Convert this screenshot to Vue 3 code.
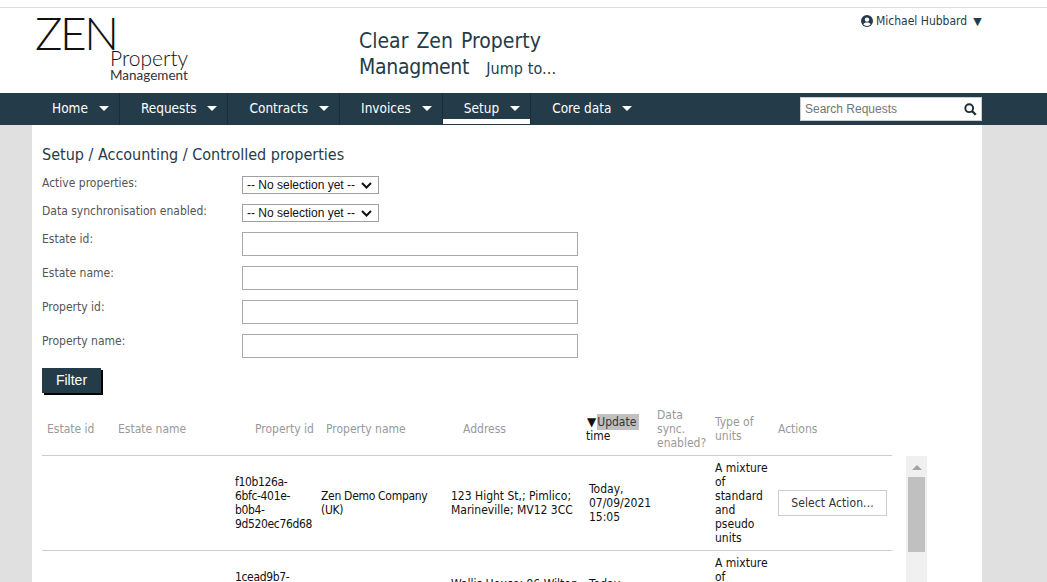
<script setup>
const navItems = [
  { label: 'Home' },
  { label: 'Requests' },
  { label: 'Contracts' },
  { label: 'Invoices' },
  { label: 'Setup', active: true },
  { label: 'Core data' }
]
const selects = ['Active properties:', 'Data synchronisation enabled:']
const inputs = ['Estate id:', 'Estate name:', 'Property id:', 'Property name:']
const rows = [
  {
    id: 'f10b126a-6bfc-401e-b0b4-9d520ec76d68',
    name: 'Zen Demo Company (UK)',
    address: '123 Hight St,; Pimlico; Marineville; MV12 3CC',
    time: 'Today, 07/09/2021 15:05'
  },
  {
    id: '1cead9b7-6bfc-401e-b0b4-9d520ec76d69',
    name: 'Zen Demo Company (UK)',
    address: 'Wallis House; 96 Wilton Road; Pimlico; Marineville; MV12 3CC',
    time: 'Today, 07/09/2021 15:05'
  }
]
</script>

<template>
  <div class="page">
    <div class="top-line"></div>
    <header class="top">
      <div class="logo">
        <div class="zen">ZEN</div>
        <div class="prop">Property</div>
        <div class="mgmt">Management</div>
      </div>
      <div class="title">
        <div class="t1">Clear Zen Property</div>
        <div><span class="t2">Managment</span><span class="jump">Jump to...</span></div>
      </div>
      <div class="user">
        <svg width="12" height="12" viewBox="0 0 12 12">
          <circle cx="6" cy="6" r="6" fill="#243c49" />
          <circle cx="6" cy="4.6" r="2.2" fill="#fff" />
          <path d="M2.3 9.3C3 7.9 4.3 7.4 6 7.4s3 .5 3.7 1.9C8.8 10.4 7.5 11 6 11s-2.8-.6-3.7-1.7z" fill="#fff" />
        </svg>
        <span>Michael Hubbard</span>
        <span class="user-caret">▼</span>
      </div>
    </header>

    <nav class="nav">
      <ul class="menu">
        <li v-for="item in navItems" :key="item.label" class="menu-item" :class="{ active: item.active }">
          <span>{{ item.label }}</span>
          <i class="caret"></i>
        </li>
      </ul>
      <div class="search">
        <span>Search Requests</span>
        <svg width="13" height="13" viewBox="0 0 13 13" fill="none" stroke="#1c2b33">
          <circle cx="5.2" cy="5.2" r="3.9" stroke-width="1.9" />
          <path d="M8.2 8.2l3.6 3.6" stroke-width="2.3" />
        </svg>
      </div>
    </nav>

    <main class="content">
      <h1 class="crumb">Setup / Accounting / Controlled properties</h1>

      <div class="selects">
        <div v-for="s in selects" :key="s" class="field sel-field">
          <label>{{ s }}</label>
          <div class="select">
            <span>-- No selection yet --</span>
            <svg width="11" height="7" viewBox="0 0 11 7" fill="none" stroke="#111" stroke-width="2">
              <path d="M1 1l4.5 4.5L10 1" />
            </svg>
          </div>
        </div>
      </div>

      <div class="inputs">
        <div v-for="i in inputs" :key="i" class="field inp-field">
          <label>{{ i }}</label>
          <div class="input"></div>
        </div>
      </div>

      <button class="filter">Filter</button>

      <div class="table-wrap">
        <table class="grid">
          <colgroup>
            <col class="c1" />
            <col class="c2" />
            <col class="c3" />
            <col class="c4" />
            <col class="c5" />
            <col class="c6" />
            <col class="c7" />
            <col class="c8" />
            <col class="c9" />
          </colgroup>
          <thead>
            <tr>
              <th>Estate id</th>
              <th>Estate name</th>
              <th class="h-c">Property id</th>
              <th class="h-d">Property name</th>
              <th class="h-e">Address</th>
              <th class="h-f"><span class="arrow">▼</span><span class="sel">Update</span> time</th>
              <th>Data sync. enabled?</th>
              <th>Type of units</th>
              <th>Actions</th>
            </tr>
          </thead>
          <tbody>
            <tr v-for="r in rows" :key="r.id">
              <td></td>
              <td></td>
              <td class="idcell">{{ r.id }}</td>
              <td class="namecell">{{ r.name }}</td>
              <td>{{ r.address }}</td>
              <td>{{ r.time }}</td>
              <td></td>
              <td>A mixture of standard and pseudo units</td>
              <td><div class="action">Select Action...</div></td>
            </tr>
          </tbody>
        </table>
        <div class="scrollbar">
          <i class="up"></i>
          <div class="thumb"></div>
        </div>
      </div>
    </main>
  </div>
</template>

<style scoped>
.page {
  width: 1047px;
  height: 582px;
  overflow: hidden;
  background: #e0e0e0;
  font-family: "DejaVu Sans Condensed", "DejaVu Sans", sans-serif;
  font-size: 12px;
  color: #243c49;
}
.top-line {
  height: 7px;
  background: #fff;
  border-bottom: 1px solid #ddd;
}
.top {
  height: 85px;
  background: #fff;
  display: flex;
}
.logo {
  width: 324px;
  padding-left: 35px;
  color: #111;
  font-family: "Lato", sans-serif;
  font-weight: 300;
  flex: none;
}
.zen { font-size: 46px; line-height: 31px; margin-top: 9px; letter-spacing: -2.5px; }
.prop { font-size: 21px; line-height: 20px; margin-left: 75px; }
.mgmt { font-size: 13.5px; line-height: 11px; margin: 2px 0 0 75px; font-weight: 400; color: #333; }
.title {
  padding: 20px 0 0 35px;
  margin-left: -35px;
  font-size: 21px;
  line-height: 26px;
  width: 537px;
  flex: none;
  box-sizing: border-box;
}
.t1 { word-spacing: 2px; }
.t2 { letter-spacing: -0.3px; }
.jump { font-size: 16px; margin-left: 17px; letter-spacing: 0.1px; }
.user {
  display: flex;
  align-items: center;
  gap: 3px;
  height: 12px;
  margin-top: 7px;
}
.user-caret { font-family: "DejaVu Sans", sans-serif; font-size: 11px; margin-left: 3px; }
.nav {
  height: 32px;
  background: #243c49;
  display: flex;
  justify-content: space-between;
  align-items: center;
  padding: 0 65px 0 31px;
}
.menu {
  list-style: none;
  margin: 0;
  padding: 0;
  display: flex;
  height: 32px;
}
.menu-item {
  display: flex;
  align-items: center;
  gap: 11px;
  padding: 0 10px 2px 21px;
  border-right: 1px solid #1a2e39;
  color: #fff;
  font-size: 13.5px;
  box-sizing: border-box;
  height: 32px;
}
.menu-item:last-child { border-right: 0; }
.menu-item.active { box-shadow: inset 0 -1px 0 #243c49, inset 0 -6px 0 #fff; }
.caret {
  width: 0;
  height: 0;
  border-left: 5px solid transparent;
  border-right: 5px solid transparent;
  border-top: 5px solid #fff;
}
.search {
  width: 182px;
  height: 24px;
  box-sizing: border-box;
  background: #fff;
  border: 1px solid #ccc;
  display: flex;
  align-items: center;
  justify-content: space-between;
  padding: 0 4px;
  font-family: "Liberation Sans", sans-serif;
  color: #757575;
}
.content {
  margin: 0 65px 0 32px;
  background: #fff;
  height: 457px;
  padding: 21px 0 0 10px;
  box-sizing: border-box;
}
.crumb {
  margin: 0;
  font-size: 16px;
  font-weight: 400;
  line-height: 18px;
  height: 21px;
}
.field {
  display: flex;
  color: #555;
}
.field label { width: 200px; flex: none; line-height: 14px; }
.selects { margin-bottom: 9px; }
.sel-field { height: 28px; padding-top: 9px; box-sizing: border-box; }
.select {
  width: 137px;
  height: 18px;
  box-sizing: border-box;
  border: 1px solid #a0a0a0;
  font-family: "Liberation Sans", sans-serif;
  color: #111;
  display: flex;
  align-items: center;
  justify-content: space-between;
  padding: 0 6px 0 4px;
}
.inp-field { height: 34px; }
.input {
  width: 336px;
  height: 24px;
  box-sizing: border-box;
  border: 1px solid #a9a9a9;
}
.filter {
  display: block;
  width: 59px;
  height: 25px;
  background: #243c49;
  color: #fff;
  border: 0;
  box-shadow: 2px 2px 0 #000;
  font-family: "Liberation Sans", sans-serif;
  font-size: 14px;
  font-weight: 400;
  padding: 0 0 2px;
}
.table-wrap {
  display: flex;
  align-items: flex-start;
  margin-top: 14px;
  gap: 14px;
}
.grid {
  width: 850px;
  table-layout: fixed;
  border-collapse: collapse;
  flex: none;
  line-height: 14px;
}
.c1 { width: 71px; }
.c2 { width: 117px; }
.c3 { width: 86px; }
.c4 { width: 130px; }
.c5 { width: 138px; }
.c6 { width: 68px; }
.c7 { width: 58px; }
.c8 { width: 63px; }
.c9 { width: 119px; }
.grid th {
  font-weight: 400;
  text-align: left;
  color: #999;
  vertical-align: middle;
  height: 48px;
  padding: 0 0 4px 5px;
  box-sizing: border-box;
  border-bottom: 1px solid #ccc;
}
.grid .h-c { padding-left: 25px; }
.grid .h-d { padding-left: 10px; }
.grid .h-e { padding-left: 17px; }
.grid .h-f { padding: 0 0 3px 2px; color: #111; }
.arrow { font-family: "DejaVu Sans", sans-serif; font-size: 12px; margin: 0 1px 0 1px; }
.sel { background: #c0c0c0; color: #333; padding: 1px 3px 1px 0; }
.grid td {
  padding: 5px;
  color: #111;
  vertical-align: middle;
  border-bottom: 1px solid #ccc;
}
.grid .idcell { letter-spacing: -0.35px; }
.grid .namecell { letter-spacing: -0.3px; }
.action {
  width: 109px;
  height: 26px;
  box-sizing: border-box;
  border: 1px solid #ccc;
  display: flex;
  align-items: center;
  justify-content: center;
  letter-spacing: 0.1px;
  color: #333;
}
.scrollbar {
  width: 21px;
  height: 200px;
  margin-top: 49px;
  background: #f0f0f0;
  flex: none;
  display: flex;
  flex-direction: column;
  align-items: center;
}
.up {
  margin-top: 9px;
  width: 0;
  height: 0;
  border-left: 5px solid transparent;
  border-right: 5px solid transparent;
  border-bottom: 5px solid #a3a3a3;
}
.thumb {
  width: 17px;
  height: 75px;
  margin-top: 7px;
  background: #c0c0c0;
}
</style>

<style>
html, body { margin: 0; overflow: hidden; }
</style>
